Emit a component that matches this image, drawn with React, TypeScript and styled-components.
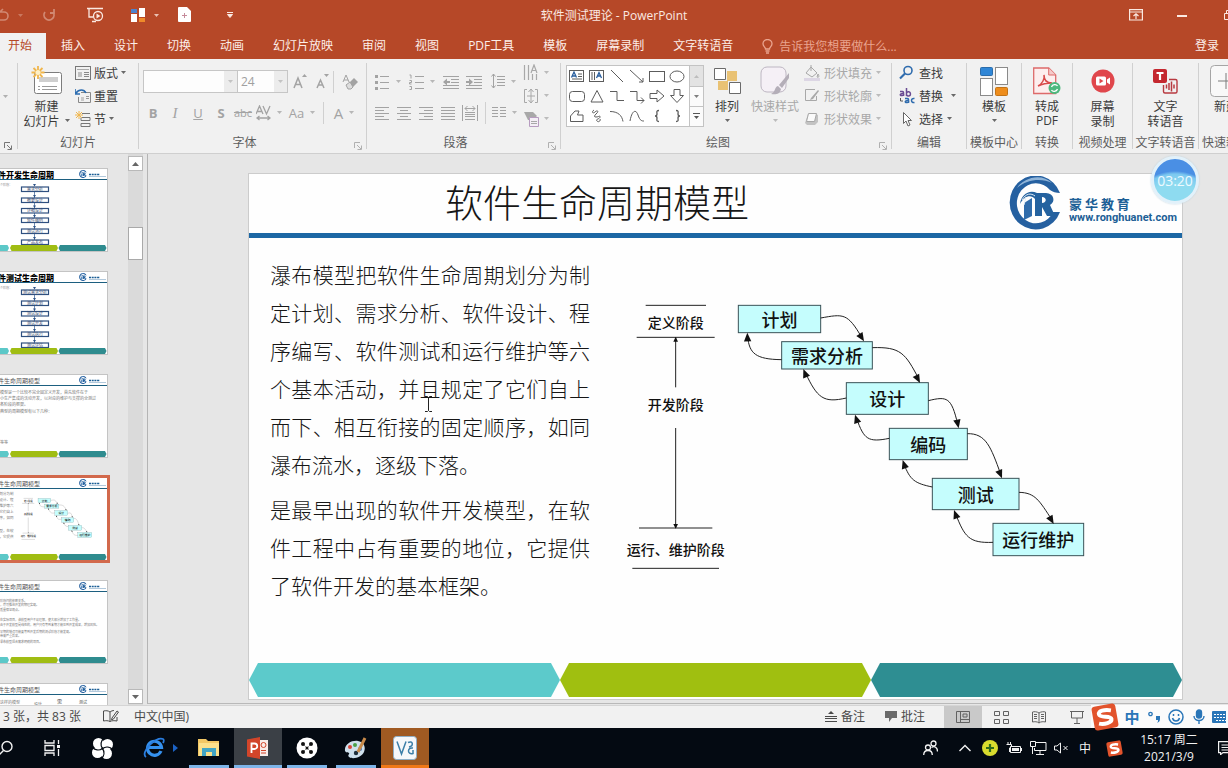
import React from "react";
import styled, { createGlobalStyle, css } from "styled-components";

const UI = `"Open Sans", "Noto Sans CJK SC", sans-serif`;
const CJK = `"Noto Sans CJK SC", sans-serif`;

const Global = createGlobalStyle`
  *, *::before, *::after { box-sizing: border-box; }
  body { margin: 0; font-family: ${UI}; font-size: 12px; color: #3b3b3b; }
  button, input, select { font: inherit; color: inherit; margin: 0; padding: 0; border: 0; background: none; }
  svg { display: block; flex: none; }
`;

const Window = styled.div`
  display: flex;
  flex-direction: column;
  height: 100vh;
  overflow: hidden;
  position: relative;
  background: #e6e6e6;
`;

/* ---------- title bar ---------- */

const TitleBar = styled.header`
  display: grid;
  grid-template-columns: 1fr auto 1fr;
  align-items: center;
  height: 33px;
  padding-bottom: 3px;
  flex: none;
  background: #b64828;
  color: #fbe9e2;
`;

const TitleSide = styled.div<{ $end?: boolean }>`
  display: flex;
  align-items: center;
  overflow: hidden;
  height: 30px;
  justify-content: ${(p) => (p.$end ? "flex-end" : "flex-start")};
`;

const BarButton = styled.button<{ $w: number; $dim?: boolean }>`
  display: flex;
  align-items: center;
  justify-content: center;
  flex: none;
  gap: 8px;
  width: ${(p) => p.$w}px;
  height: 30px;
  opacity: ${(p) => (p.$dim ? 0.4 : 1)};
`;

const AppTitle = styled.h1`
  margin: 0;
  font-size: 12px;
  font-weight: 400;
`;

/* ---------- tabs ---------- */

const TabBar = styled.nav`
  display: flex;
  height: 26px;
  flex: none;
  overflow: hidden;
  background: #b64828;
  color: #fdeee8;
`;

const Tab = styled.button<{ $active?: boolean }>`
  flex: none;
  padding: 0 14px 2px 15px;
  white-space: nowrap;
  &:first-child { margin-left: -7px; }
  ${(p) => p.$active && css`background: #f1f1f1; color: #b64828;`}
`;

const TellMe = styled.label`
  display: flex;
  align-items: center;
  gap: 6px;
  margin-left: 15px;
  flex: 1;
  color: #eaa48f;
`;

const TellInput = styled.input`
  width: 130px;
  outline: none;
  &::placeholder { color: #eaa48f; opacity: 1; }
`;

const SignIn = styled.button`
  flex: none;
  padding: 0 9px 2px;
`;

/* ---------- ribbon ---------- */

const Ribbon = styled.section`
  display: flex;
  flex: none;
  height: 95px;
  overflow: hidden;
  background: #f1f1f1;
  border-bottom: 1px solid #cfcfcf;
`;

const GroupBox = styled.div<{ $w: number; $dim?: boolean }>`
  position: relative;
  display: flex;
  flex-direction: column;
  flex: none;
  width: ${(p) => p.$w}px;
  padding-top: 2px;
`;

const GroupBody = styled.div<{ $pad?: number; $center?: boolean }>`
  display: flex;
  height: 70px;
  padding-left: ${(p) => p.$pad ?? 0}px;
  justify-content: ${(p) => (p.$center ? "center" : "flex-start")};
`;

const GroupFoot = styled.div`
  display: flex;
  align-items: center;
  height: 22px;
  color: #5d5d5d;
  white-space: nowrap;
`;

const GroupName = styled.span`
  flex: 1;
  text-align: center;
`;

const Launcher = styled.button<{ $dim?: boolean }>`
  width: 16px;
  height: 16px;
  flex: none;
  color: ${(p) => (p.$dim ? "#b0b0b0" : "#777")};
  padding: 7px 0 0 4px;
`;

const Rule = styled.i<{ $h?: number }>`
  flex: none;
  width: 1px;
  height: ${(p) => p.$h ?? 86}px;
  margin-top: ${(p) => (p.$h ? 0 : 4)}px;
  background: #d0d0d0;
`;

const BigButton = styled.button<{ $w: number; $dim?: boolean }>`
  display: flex;
  flex-direction: column;
  align-items: center;
  flex: none;
  width: ${(p) => p.$w}px;
  color: ${(p) => (p.$dim ? "#a8a8a8" : "#3b3b3b")};
  white-space: nowrap;
`;

const BigIcon = styled.span`
  display: flex;
  align-items: center;
  height: 37px;
  padding-top: 3px;
`;

const BigLine = styled.span`
  display: flex;
  align-items: center;
  gap: 5px;
  height: 15px;
`;

const Stack = styled.div<{ $w?: number }>`
  display: flex;
  flex-direction: column;
  flex: none;
  width: ${(p) => (p.$w ? p.$w + "px" : "auto")};
`;

const RowButton = styled.button<{ $dim?: boolean; $gap?: number; $pad?: number }>`
  display: flex;
  align-items: center;
  gap: ${(p) => p.$gap ?? 4}px;
  height: 23px;
  padding-left: ${(p) => p.$pad ?? 0}px;
  color: ${(p) => (p.$dim ? "#a8a8a8" : "#3b3b3b")};
  white-space: nowrap;
`;

const ToolRows = styled.div`
  display: flex;
  flex-direction: column;
  flex: none;
  padding-top: 5px;
`;

const ToolRow = styled.div`
  display: flex;
  align-items: center;
  height: 31px;
  color: #a3a3a3;
`;

const Tool = styled.button<{ $w: number }>`
  display: flex;
  align-items: center;
  justify-content: center;
  gap: 6px;
  flex: none;
  width: ${(p) => p.$w}px;
  height: 22px;
`;

const PasteMore = styled.button`
  display: flex;
  align-items: center;
  height: 70px;
  color: #9a9a9a;
`;

const Glyph = styled.span<{ $size?: number; $bold?: boolean; $italic?: boolean; $line?: string }>`
  font-size: ${(p) => p.$size ?? 13}px;
  line-height: 16px;
  font-weight: ${(p) => (p.$bold ? 700 : 400)};
  font-style: ${(p) => (p.$italic ? "italic" : "normal")};
  font-family: ${(p) => (p.$italic ? `"Liberation Serif", serif` : UI)};
  text-decoration: ${(p) => p.$line ?? "none"};
`;

const Combo = styled.span<{ $w: number }>`
  display: flex;
  align-items: center;
  position: relative;
  width: ${(p) => p.$w}px;
  height: 23px;
  margin-right: -1px;
  border: 1px solid #c6c6c6;
  background: #fdfdfd;
`;

const ComboSelect = styled.select`
  appearance: none;
  flex: 1;
  min-width: 0;
  height: 21px;
  padding-left: 3px;
  opacity: 1;
  font-size: 12px;
  color: #a0a0a0;
`;

const ComboArrow = styled.span`
  display: flex;
  align-items: center;
  justify-content: center;
  width: 13px;
  height: 21px;
  background: #ececec;
  color: #b5b5b5;
`;

const Gallery = styled.div`
  display: flex;
  height: 62px;
  margin-top: 4px;
  border: 1px solid #c3c3c3;
  background: #fff;
`;

const ShapeGrid = styled.div`
  display: grid;
  grid-template-columns: repeat(6, 20px);
  grid-template-rows: repeat(3, 20px);
  width: 122px;
  color: #5c5c5c;
`;

const ShapeCell = styled.button`
  display: flex;
  align-items: center;
  justify-content: center;
`;

const GalleryArrows = styled.div`
  display: grid;
  grid-template-rows: repeat(3, 1fr);
  width: 14px;
  border-left: 1px solid #c3c3c3;
`;

const GalleryArrow = styled.button<{ $dim?: boolean }>`
  display: flex;
  align-items: center;
  justify-content: center;
  color: ${(p) => (p.$dim ? "#bdbdbd" : "#555")};
  background: ${(p) => (p.$dim ? "#e3e3e3" : "#fbfbfb")};
  & + & { border-top: 1px solid #c3c3c3; }
`;

/* ---------- work area ---------- */

const Work = styled.main`
  display: flex;
  flex: 1;
  min-height: 0;
`;

const ThumbPane = styled.aside`
  width: 128px;
  flex: none;
  overflow: hidden;
  padding-top: 14px;
`;

const ThumbList = styled.ol`
  display: flex;
  flex-direction: column;
  gap: 19px;
  margin: 0 0 0 -42px;
  padding: 0;
  list-style: none;
`;

const ThumbItem = styled.li<{ $selected?: boolean }>`
  width: 150px;
  height: 84px;
  background: #fff;
  outline: ${(p) => (p.$selected ? "3px solid #d2694c" : "1px solid #c4c4c4")};
  outline-offset: -1px;
`;

const ScrollTrack = styled.div`
  display: flex;
  flex-direction: column;
  width: 15px;
  flex: none;
  padding: 2px 0 1px;
  background: #dadada;
`;

const ScrollButton = styled.button`
  display: flex;
  align-items: center;
  justify-content: center;
  height: 15px;
  flex: none;
  border: 1px solid #b9b9b9;
  background: #fff;
  color: #666;
`;

const ScrollRun = styled.div`
  flex: 1;
  padding-top: 56px;
`;

const ScrollThumb = styled.div`
  height: 33px;
  border: 1px solid #a9a9a9;
  background: #fff;
`;

const Canvas = styled.section`
  flex: 1;
  min-width: 0;
  display: flex;
  margin-left: 4px;
  padding: 20px 46px 4px 101px;
  border-left: 1px solid #b4b4b4;
  border-bottom: 1px solid #b9b9b9;
  margin-bottom: 1px;
`;

const Slide = styled.article`
  position: relative;
  display: flex;
  flex-direction: column;
  flex: 1;
  min-width: 0;
  background: #fefefe;
  outline: 1px solid #cccccc;
  color: #161616;
`;

const SlideHead = styled.div`
  display: flex;
  align-items: flex-start;
  justify-content: space-between;
  height: 59px;
  padding: 0 5px 0 196px;
`;

const SlideTitle = styled.h2`
  margin: 0;
  font: 300 38px/54px ${CJK};
  white-space: nowrap;
`;

const Brand = styled.div`
  display: flex;
  align-items: center;
  gap: 6px;
  padding-top: 2px;
`;

const BrandText = styled.div`
  display: flex;
  flex-direction: column;
  padding-top: 14px;
  color: #1c5f96;
`;

const BrandName = styled.span`
  font: 700 13px/15px ${CJK};
`;

const BrandLink = styled.a`
  font: 700 11px/14px Roboto, sans-serif;
  color: inherit;
  text-decoration: none;
`;

const BlueRule = styled.div`
  height: 5px;
  background: #1c67a4;
`;

const SlideBody = styled.div`
  position: relative;
  display: flex;
  flex: 1;
  min-height: 0;
  gap: 20px;
  padding: 17px 0 0 21px;
`;

const SlideText = styled.div`
  position: relative;
  flex: none;
  width: 320px;
`;

const Para = styled.p`
  margin: 0 0 7px;
  font: 300 21px/38px ${CJK};
  text-align: justify;
`;

const Figure = styled.div`
  padding-top: 35px;
`;

const Caret = styled.svg`
  position: absolute;
  left: 154px;
  top: 141px;
`;

const Bands = styled.div`
  display: flex;
  height: 34px;
  margin-bottom: 2px;
`;

const Band = styled.div<{ $c: string }>`
  flex: 1;
  background: ${(p) => p.$c};
  clip-path: polygon(0 50%, 9px 0, calc(100% - 9px) 0, 100% 50%, calc(100% - 9px) 100%, 9px 100%);
`;

const TimerBadge = styled.div`
  position: absolute;
  right: 29px;
  top: 156px;
  display: flex;
  align-items: center;
  justify-content: center;
  width: 48px;
  height: 48px;
  border-radius: 50%;
  border: 3px solid #e2f1fa;
  background: radial-gradient(circle at 21px 60px, #8edbf0 0 36px, #7cc8f0 45px, #4a8fe4 48px);
  color: #eefaff;
  font-size: 14px;
  box-shadow: 0 0 2px #b9cfdc;
`;

/* ---------- status bar ---------- */

const StatusBar = styled.footer`
  display: flex;
  align-items: center;
  height: 23px;
  flex: none;
  padding-left: 3px;
  background: #f1f1f1;
  border-top: 1px solid #d5d5d5;
  color: #4a4a4a;
  white-space: nowrap;
`;

const StatusItem = styled.button<{ $ml?: number }>`
  display: flex;
  align-items: center;
  gap: 4px;
  flex: none;
  height: 22px;
  padding-bottom: 3px;
  margin-left: ${(p) => p.$ml ?? 0}px;
`;

const Spacer = styled.span`
  flex: 1;
`;

const ViewButton = styled.button<{ $on?: boolean }>`
  display: flex;
  align-items: center;
  justify-content: center;
  flex: none;
  width: 38px;
  height: 22px;
  background: ${(p) => (p.$on ? "#c9c9c9" : "transparent")};
  color: #626262;
`;

const ViewGroup = styled.div`
  display: flex;
  flex: none;
  margin: 0 132px 0 19px;
`;

const ImeBar = styled.div`
  position: absolute;
  right: 0;
  bottom: 40px;
  display: flex;
  align-items: center;
  height: 23px;
  width: 137px;
  background: #fbfbfb;
  color: #2a76b8;
`;

const ImeSlot = styled.button<{ $w: number }>`
  display: flex;
  align-items: center;
  justify-content: center;
  flex: none;
  width: ${(p) => p.$w}px;
  font: 700 15px/20px ${CJK};
`;

/* ---------- taskbar ---------- */

const TaskBar = styled.footer`
  display: flex;
  height: 40px;
  flex: none;
  overflow: hidden;
  background: #040a12;
  color: #f2f2f2;
`;

const TaskItem = styled.button<{ $w: number; $bg?: string; $bar?: string; $pl?: number; $pr?: number }>`
  display: flex;
  align-items: center;
  justify-content: center;
  gap: 8px;
  flex: none;
  width: ${(p) => p.$w}px;
  padding: 0 ${(p) => p.$pr ?? 0}px 0 ${(p) => p.$pl ?? 0}px;
  margin: 0 ${(p) => (p.$bar && !p.$bg ? 4 : 0)}px;
  background: ${(p) => p.$bg ?? "transparent"};
  border-bottom: 3px solid ${(p) => p.$bar ?? "transparent"};
  border-top: 3px solid transparent;
`;

const Running = styled.div`
  display: flex;
  gap: 1px;
`;

const Tray = styled.div`
  display: flex;
  align-items: center;
  flex: none;
`;

const TrayItem = styled.button<{ $w: number; $pl?: number }>`
  display: flex;
  align-items: center;
  justify-content: center;
  flex: none;
  width: ${(p) => p.$w}px;
  padding-left: ${(p) => p.$pl ?? 0}px;
  height: 40px;
`;

const Clock = styled.time`
  display: flex;
  flex-direction: column;
  align-items: center;
  width: 78px;
  line-height: 17px;
  white-space: nowrap;
`;

/* ---------- drawing helpers ---------- */

type IconProps = { w?: number; h?: number; vb?: string; sw?: number; children: React.ReactNode };
const Icon = ({ w = 16, h = 16, vb, sw = 1, children }: IconProps) => (
  <svg width={w} height={h} viewBox={vb ?? `0 0 ${w} ${h}`} fill="none" stroke="currentColor" strokeWidth={sw} aria-hidden="true">
    {children}
  </svg>
);

const Down = () => (
  <Icon w={5} h={3}><path d="M0 0h5L2.500 3z" fill="currentColor" fillOpacity=".75" stroke="none" /></Icon>
);

const LauncherIcon = () => (
  <Icon w={8} h={8}><path d="M.5 6V.5H6M3 3l4 4M7.500 3.500v4h-4" /></Icon>
);

function Group({ w, name, pad, center, launcher, dimLauncher, children }: {
  w: number; name: string; pad?: number; center?: boolean; launcher?: boolean; dimLauncher?: boolean; children?: React.ReactNode;
}) {
  return (
    <>
      <GroupBox $w={w}>
        <GroupBody $pad={pad} $center={center}>{children}</GroupBody>
        <GroupFoot>
          {name && <GroupName>{name}</GroupName>}
          {launcher && <Launcher $dim={dimLauncher} aria-label={`${name}选项`}><LauncherIcon /></Launcher>}
        </GroupFoot>
      </GroupBox>
      <Rule />
    </>
  );
}

const Lines = ({ rows }: { rows: [number, number][] }) => (
  <Icon w={16} h={16}>{rows.map(([a, b], i) => <path key={i} d={`M${a} ${2.5 + i * 3}H${b}`} />)}</Icon>
);

const shapes: { name: string; art: React.ReactNode }[] = [
  { name: "横排文本框", art: <><rect x=".5" y="2.500" width="14" height="11" /><path d="M9 6h4M9 8.500h4M3 11h10" /><path d="M2.500 9.500 5 4l2.500 5.500M3.500 8h3" stroke="#2a5f9e" strokeWidth="1.300" /></> },
  { name: "竖排文本框", art: <><rect x=".5" y="2.500" width="14" height="11" /><path d="M3 4v8M5.500 4v8" /><path d="M7.500 10 10 4.500l2.500 5.500M8.500 8h3" stroke="#2a5f9e" strokeWidth="1.300" /></> },
  { name: "直线", art: <path d="M2 2l12 12" /> },
  { name: "箭头", art: <path d="M1 2l13 12M14 10v4h-4" /> },
  { name: "矩形", art: <rect x=".5" y="3.500" width="15" height="10" /> },
  { name: "椭圆", art: <ellipse cx="8" cy="8.500" rx="7" ry="5.500" /> },
  { name: "圆角矩形", art: <rect x=".5" y="3.500" width="15" height="10" rx="3" /> },
  { name: "三角形", art: <path d="M8 2.500 14 14H2z" /> },
  { name: "肘形连接符", art: <path d="M1 3.500h7v9h7" /> },
  { name: "肘形箭头", art: <path d="M1 3.500h7v9h7M12 9.500l3 3-3 3" /> },
  { name: "右箭头", art: <path d="M1 5.500h7V2l7 6-7 6v-3.500H1z" /> },
  { name: "下箭头", art: <path d="M5 1.500h6v6h3.500L8 14.500 1.500 7.500H5z" /> },
  { name: "任意多边形", art: <path d="M1.500 8 6 3h4L8.500 7h5.500v6.500H1.500z" /> },
  { name: "自由曲线", art: <path d="M5 2C2 4 4 6 6 4s4-1 2 1-4 4-1 4 4-2 4 0-5 2-3 4 4-1 3-2" /> },
  { name: "弧形", art: <path d="M1 3.500c8 0 12 4 13 10" /> },
  { name: "曲线", art: <path d="M1 13C3 2 7 1 9 7s4 6 6 6" /> },
  { name: "左大括号", art: <path d="M10 2.500c-3 0-2 2-2 3.500S7 8 6 8c1 0 2 .5 2 2s-1 3.500 2 3.500" strokeWidth="1.300" /> },
  { name: "右大括号", art: <path d="M7 2.500c3 0 2 2 2 3.500S10 8 11 8c-1 0-2 .5-2 2s1 3.500-2 3.500" strokeWidth="1.300" /> },
];

/* Waterfall model figure, shared by the slide and its thumbnail */
const steps = [
  { t: "计划", x: 385, y: 46, w: 247, h: 82 },
  { t: "需求分析", x: 515, y: 155, w: 272, h: 82 },
  { t: "设计", x: 709, y: 278, w: 246, h: 95 },
  { t: "编码", x: 838, y: 415, w: 234, h: 94 },
  { t: "测试", x: 967, y: 565, w: 260, h: 94 },
  { t: "运行维护", x: 1149, y: 700, w: 272, h: 97 },
];

const links = [
  "M632 84C700 72 712 68 755 142",
  "M787 173C872 170 886 190 926 266",
  "M955 332C1012 318 1024 322 1043 402",
  "M1072 431C1128 430 1142 470 1172 552",
  "M1227 607C1276 608 1288 632 1326 690",
  "M515 209C436 208 418 190 413 140",
  "M709 324C640 340 622 324 586 248",
  "M838 445C774 458 762 448 740 386",
  "M967 591C914 580 900 570 882 522",
  "M1149 757C1076 760 1064 740 1037 672",
];

const heads: [number, number, number][] = [
  [762, 154, 58], [930, 279, 62], [1046, 415, 78], [1176, 565, 68], [1331, 702, 60],
  [412, 128, -92], [580, 237, -112], [735, 374, -108], [878, 510, -108], [1032, 660, -110],
];

const Waterfall = () => (
  <g fontFamily={CJK} fill="#111" textAnchor="middle">
    <g stroke="#222" strokeWidth="3" fill="none">
      <path d="M107 46H288M80 142H314M87 714H307M67 835H327M197 142V292M197 414V714" />
    </g>
    <path d="M190 155L197 140 204 155zM190 702L197 716 204 702z" />
    <g fontSize="42" fontWeight="500">
      <text x="197" y="113">定义阶段</text>
      <text x="197" y="359">开发阶段</text>
      <text x="197" y="795">运行、维护阶段</text>
    </g>
    {steps.map((s) => (
      <g key={s.t}>
        <rect x={s.x} y={s.y} width={s.w} height={s.h} fill="#c5fdfd" stroke="#3a5358" strokeWidth="3" />
        <text x={s.x + s.w / 2} y={s.y + s.h / 2 + 23} fontSize="54" fontWeight="500">{s.t}</text>
      </g>
    ))}
    <g stroke="#222" strokeWidth="3" fill="none">{links.map((d) => <path key={d} d={d} />)}</g>
    {heads.map(([x, y, a]) => <path key={x} d="M0 0L-26-11V11z" transform={`translate(${x} ${y}) rotate(${a})`} />)}
  </g>
);

const LogoMark = () => (
  <g stroke="none">
    <path d="M51 17A26 27 0 1 0 51 36H44A19 20 0 1 1 41 14Q45 17 51 17z" fill="#2560a0" />
    <path d="M8 12C15 1 33-3 43 7 33 2 18 3 8 12z" fill="#8fb4d8" />
    <path d="M11 28C12 19 20 13 28 17H37C45 17 47 26 41 29L46 40H38L33 31V40H26V23C22 18 15 20 11 28z" fill="#24629f" />
    <path d="M33 21V27C38 27 38 21 33 21z" fill="#fefefe" />
    <path d="M15 27L23 22V40L15 44z" fill="#2f6cab" />
    <path d="M13 24C17 17 22 17 26 20M17 21L15 29" fill="none" stroke="#e4eef6" strokeWidth="1" />
  </g>
);

const ThumbFrame = ({ title, bold, children }: { title: string; bold?: boolean; children?: React.ReactNode }) => (
  <svg width="150" height="84" viewBox="0 0 150 84" fontFamily={CJK}>
    <text x={bold ? 96 : 82} y={bold ? 10 : 9} textAnchor="end" fontSize={bold ? 8 : 6} fontWeight={bold ? 900 : 400} fill={bold ? "#000" : "#555"}>{title}</text>
    <g transform="translate(121 2) scale(.15)"><LogoMark /></g>
    <path d="M131 6.500h11" stroke="#1c5f96" strokeWidth="1.500" strokeDasharray="2 .7" />
    <path d="M131 8.500h17" stroke="#7ea5c4" strokeWidth=".6" />
    <path d="M0 11.500H149" stroke="#1c5f80" strokeWidth="1" />
    {children}
    <path d="M1 80l1.500-3h47L51 80l-1.500 3h-47z" fill="#5cc8c8" />
    <path d="M52 80l1.500-3h45L100 80l-1.500 3h-45z" fill="#a0bd13" />
    <path d="M100.500 80l1.500-3h45L148.500 80 147 83h-45z" fill="#2f8c8f" />
  </svg>
);

const FlowChart = ({ labels }: { labels: string[] }) => (
  <g>
    <text x="0" y="18" fontSize="3" fill="#888">软件的整个生命周期分为以下几个阶段：</text>
    <path d="M76.500 21V74" stroke="#4a6c9c" strokeWidth=".8" />
    {labels.map((l, i) => {
      const y = [19, 30, 40.5, 50, 61, 72][i];
      return (
        <g key={l}>
          <path d={`M75 ${y - 3}h3l-1.500 2.500z`} fill="#2f5488" />
          <rect x="63.500" y={y} width="27" height="4.500" fill="#fff" stroke="#2f5080" strokeWidth="1.200" />
          <text x="77" y={y + 3.7} fontSize="4" textAnchor="middle" fill="#3b4c70">{l}</text>
        </g>
      );
    })}
  </g>
);

const MiniText = ({ x = 42, size = 4, lines }: { x?: number; size?: number; lines: [number, string][] }) => (
  <g fontSize={size} fill="#777">{lines.map(([y, t]) => <text key={y} x={x} y={y}>{t}</text>)}</g>
);

const SogouMark = ({ s }: { s: number }) => (
  <Icon w={s} h={s} vb="0 0 28 28">
    <g transform="rotate(-10 14 14)">
      <rect x="2" y="2" width="24" height="24" rx="3" fill="#e2532c" stroke="none" />
      <path d="M21 8.500C15 6.500 8 6.500 8.500 10.500S20 13 20 17s-8 4.500-13 2.500" stroke="#fff" strokeWidth="4" />
    </g>
  </Icon>
);

const tabs = ["开始", "插入", "设计", "切换", "动画", "幻灯片放映", "审阅", "视图", "PDF工具", "模板", "屏幕录制", "文字转语音"];

export default function App() {
  return (
    <Window>
      <Global />
      <TitleBar>
        <TitleSide>
          <BarButton $w={10} $dim aria-label="撤消"><Icon w={10} h={14} sw={1.6}><path d="M0 4h4a4 4 0 0 1 0 8H0M0 4l3-3" /></Icon></BarButton>
          <BarButton $w={20} $dim aria-label="撤消列表"><Down /></BarButton>
          <BarButton $w={37} $dim aria-label="恢复"><Icon w={14} h={14} sw={1.8}><path d="M3 4a5 5 0 1 0 8 0M8 5h4V1" /></Icon></BarButton>
          <BarButton $w={56} aria-label="从头开始"><Icon w={17} h={16} sw={1.3}><path d="M0 1.500h16M2 2v8h4M5 14.500h4" /><circle cx="11" cy="9" r="4.500" /><path d="M9.500 6.500v5l4-2.500z" fill="currentColor" stroke="none" /></Icon></BarButton>
          <BarButton $w={44} aria-label="模板">
            <Icon w={15} h={15}><g stroke="none"><path fill="#4d82cc" d="M0 1h6v4H0z" /><path fill="#fff" d="M0 6h6v8H0zM8 0h6v9H8z" /><path fill="#ef8a2a" d="M8 10h6v4H8z" /></g></Icon>
            <Down />
          </BarButton>
          <BarButton $w={35} aria-label="新建"><Icon w={13} h={16}><path d="M1 0h8l4 4v10a1 1 0 0 1-1 1H1a1 1 0 0 1-1-1V1a1 1 0 0 1 1-1z" fill="#fff" stroke="none" /><path d="M4 8.500h5M6.500 6v5" stroke="#c58a9a" /></Icon></BarButton>
          <BarButton $w={56} aria-label="自定义快速访问工具栏"><Icon w={7} h={6}><path d="M0 .5h6M.5 2.500h5L3 5.500z" fill="currentColor" /></Icon></BarButton>
        </TitleSide>
        <AppTitle>软件测试理论 - PowerPoint</AppTitle>
        <TitleSide $end>
          <BarButton $w={46} aria-label="功能区显示选项"><Icon w={14} h={12} sw={1.2}><path d="M.6.6h12.800v10.400H.6zM.6 3h13M7 10V5M4.500 7 7 4.800 9.500 7" /></Icon></BarButton>
          <BarButton $w={46} aria-label="最小化"><Icon w={10} h={6} sw={2}><path d="M0 4h10" /></Icon></BarButton>
          <BarButton $w={23} aria-label="还原"><Icon w={23} h={10}><path d="M19.500 3.500h6v6h-6zM21.500 3V.5H26" /></Icon></BarButton>
        </TitleSide>
      </TitleBar>

      <TabBar>
        {tabs.map((t, i) => <Tab key={t} $active={i === 0}>{t}</Tab>)}
        <TellMe>
          <Icon w={11} h={15} sw={1.3}><path d="M3.500 10C3.500 8 1 7.500 1 4.800a4.500 4.300 0 0 1 9 0C10 7.500 7.500 8 7.500 10zM3.500 12h4M4 14h3" /></Icon>
          <TellInput placeholder="告诉我您想要做什么..." aria-label="告诉我您想要做什么" />
        </TellMe>
        <SignIn>登录</SignIn>
      </TabBar>

      <Ribbon>
        <Group w={17} name="" launcher pad={3}><PasteMore aria-label="粘贴选项"><Down /></PasteMore></Group>

        <Group w={120} name="幻灯片">
          <BigButton $w={57}>
            <BigIcon><Icon w={32} h={30}>
              <rect x="3.500" y="6.500" width="27" height="21" rx="2" fill="#fff" stroke="#7c7c7c" /><path d="M8 11h19v5H8z" fill="#cfcfcf" stroke="none" /><path d="M7 20.500h2M11 20.500h15M7 23.500h2M11 23.500h15" stroke="#9a9a9a" />
              <path d="M7 0v13M.5 6.500h13M2.500 2l9 9M11.500 2l-9 9" stroke="#f0b64c" strokeWidth="1.800" /><circle cx="7" cy="6.500" r="2.500" fill="#fdf0c8" stroke="none" />
            </Icon></BigIcon>
            <BigLine>新建</BigLine>
            <BigLine>幻灯片 <Down /></BigLine>
          </BigButton>
          <Stack>
            <RowButton $gap={3}><Icon><rect x=".5" y="1.500" width="15" height="13" stroke="#777" /><path d="M2 4.500h12" stroke="#aaa" /><path d="M3 7h4v5H3z" fill="#c0c0c0" stroke="none" /><path d="M9 7.500h5M9 9.500h5M9 11.500h5" stroke="#888" /></Icon>版式<Down /></RowButton>
            <RowButton $gap={3}><Icon><path d="M6 4.500h9.500v10H3.500V9" stroke="#888" /><path d="M6 9h3v4H6z" fill="#c9c9c9" stroke="none" /><path d="M11 8.500h3M11 10.500h3" stroke="#999" /><path d="M1 5c3-4 8-4 10 0M0 1v5h5" stroke="#2b6cb0" strokeWidth="1.600" /></Icon>重置</RowButton>
            <RowButton $gap={3}><Icon><path d="M7 2.500h8M6 6.500h9v3H6zM6 12.500h9v3H6z" stroke="#777" /><path d="M4 0v8M0 4h8M1 1l6 6M7 1 1 7" stroke="#f0b64c" /></Icon>节<Down /></RowButton>
          </Stack>
        </Group>

        <Group w={227} name="字体" launcher dimLauncher pad={4}>
          <ToolRows>
            <ToolRow>
              <Combo $w={95}><ComboSelect aria-label="字体" disabled><option></option></ComboSelect><ComboArrow><Down /></ComboArrow></Combo>
              <Combo $w={51}><ComboSelect aria-label="字号" disabled><option>24</option></ComboSelect><ComboArrow><Down /></ComboArrow></Combo>
              <Tool $w={26} aria-label="增大字号"><Icon w={14} h={16} sw={1.5}><path d="M1 14 5 4l4 10M2.500 10.500h5" /><path d="M9 3h5l-2.500-3z" fill="currentColor" stroke="none" /></Icon></Tool>
              <Tool $w={20} aria-label="减小字号"><Icon w={14} h={16} sw={1.5}><path d="M1 14 4.500 6 8 14M2.500 11h4" /><path d="M8 0h5l-2.500 3z" fill="currentColor" stroke="none" /></Icon></Tool>
              <Rule $h={22} />
              <Tool $w={32} aria-label="清除格式"><Icon w={16} h={16}><path d="M1 8 4 1l3 7M2 6h4" /><path d="M8 8l4-4 4 4-5 5-3-1z" fill="currentColor" stroke="none" /><path d="M4 11l4-3 3 5-2 2H6z" fill="#ddd" /></Icon></Tool>
            </ToolRow>
            <ToolRow>
              <Tool $w={20}><Glyph $bold>B</Glyph></Tool>
              <Tool $w={24}><Glyph $italic $size={15}>I</Glyph></Tool>
              <Tool $w={22}><Glyph $line="underline">U</Glyph></Tool>
              <Tool $w={24}><Glyph $bold>S</Glyph></Tool>
              <Tool $w={20}><Glyph $size={11} $line="line-through">abc</Glyph></Tool>
              <Tool $w={32} aria-label="字符间距"><Icon w={15} h={16} sw={1.3}><path d="M0 9 3.500 1 7 9M1.500 6.500h4M7 1l3.500 8L14 1M1 13h13M3.500 11l-2.500 2 2.500 2M11.500 11l2.500 2-2.500 2" /></Icon><Down /></Tool>
              <Tool $w={34}><Glyph>Aa</Glyph><Down /></Tool>
              <Tool $w={4} aria-hidden="true" />
              <Rule $h={22} />
              <Tool $w={40}><Glyph $size={15}>A</Glyph><Down /></Tool>
            </ToolRow>
          </ToolRows>
        </Group>

        <Group w={193} name="段落" launcher dimLauncher pad={4}>
          <ToolRows>
            <ToolRow>
              <Tool $w={34} aria-label="项目符号"><Icon w={15} h={16}><path d="M5 2.500h9M5 8.500h9M5 14.500h9" /><path d="M0 1h3v3H0zM0 7h3v3H0zM0 13h3v3H0z" fill="currentColor" stroke="none" /></Icon><Down /></Tool>
              <Tool $w={34} aria-label="编号"><Icon w={15} h={16}><path d="M6 2.500h9M6 8.500h9M6 14.500h9M.5 1H2v3.500M.5 6.500h2v2h-2v1.500h2M.5 12.500h2v3h-2" /></Icon><Down /></Tool>
              <Tool $w={23} aria-label="减少缩进"><Icon w={16}><path d="M0 2.500h16M8 5.500h8M8 8.500h8M0 11.500h16M0 14.500h16" /><path d="M7 7H4V4.500L0 8l4 3.500V9h3z" fill="currentColor" stroke="none" /></Icon></Tool>
              <Tool $w={23} aria-label="增加缩进"><Icon w={16}><path d="M0 2.500h16M8 5.500h8M8 8.500h8M0 11.500h16M0 14.500h16" /><path d="M0 7h3V4.500L7 8l-4 3.500V9H0z" fill="currentColor" stroke="none" /></Icon></Tool>
              <Tool $w={37} aria-label="行距"><Icon w={14} h={17}><path d="M6 3.500h8M6 6.500h8M6 9.500h8M6 12.500h8M2.500 1v14M.5 3.500l2-2.500 2 2.500M.5 12.500l2 2.500 2-2.500" /></Icon><Down /></Tool>
            </ToolRow>
            <ToolRow>
              <Tool $w={22} aria-label="左对齐"><Lines rows={[[1, 15], [1, 10], [1, 15], [1, 10], [1, 15]]} /></Tool>
              <Tool $w={22} aria-label="居中"><Lines rows={[[1, 15], [4, 12], [1, 15], [4, 12], [1, 15]]} /></Tool>
              <Tool $w={22} aria-label="右对齐"><Lines rows={[[1, 15], [6, 15], [1, 15], [6, 15], [1, 15]]} /></Tool>
              <Tool $w={22} aria-label="两端对齐"><Lines rows={[[1, 15], [1, 15], [1, 15], [1, 15], [1, 15]]} /></Tool>
              <Tool $w={22} aria-label="分散对齐"><Icon w={16}><path d="M.5 0v16M15.500 0v16M3 7.500h10M3 9.500h10M3 11.500h10M3 14.500h10M3 3.500h10M5.500 1 3 3.500 5.500 6M10.500 1 13 3.500 10.500 6" /></Icon></Tool>
              <Tool $w={4} aria-hidden="true" />
              <Rule $h={22} />
              <Tool $w={36} aria-label="分栏"><Icon w={14} h={14}><path d="M0 1.500h6M8 1.500h6M0 4.500h6M8 4.500h6M0 7.500h6M8 7.500h6M0 10.500h6M8 10.500h6" /></Icon><Down /></Tool>
            </ToolRow>
          </ToolRows>
          <Stack>
            <RowButton $dim aria-label="文字方向"><Icon w={18} h={18} sw={1.2}><path d="M2.500 1v15M6.500 1v15M10.500 10v6M14.500 10v6M9 9l3-8 3 8M10 6.500h4" /></Icon><Down /></RowButton>
            <RowButton $dim aria-label="对齐文本"><Icon w={18} h={16}><path d="M5 1.500H2.500v13H5M13 1.500h2.500v13H13M5 8h8M9 1v14M6.500 4 9 1l2.500 3M6.500 12 9 15l2.500-3" /></Icon><Down /></RowButton>
            <RowButton $dim aria-label="转换为 SmartArt"><Icon w={18} h={16}><path d="M2 1h9l4 4-4 4H6z" fill="currentColor" stroke="none" /><path d="M7.500 6.500h9v9h-9z" fill="#f4eef6" stroke="#b79cc0" /><path d="M9 10.500h6M9 12.500h6" /></Icon><Down /></RowButton>
          </Stack>
        </Group>

        <Group w={330} name="绘图" launcher dimLauncher pad={5}>
          <Gallery>
            <ShapeGrid>
              {shapes.map((s) => <ShapeCell key={s.name} aria-label={s.name}><Icon>{s.art}</Icon></ShapeCell>)}
            </ShapeGrid>
            <GalleryArrows>
              <GalleryArrow $dim aria-label="上一行"><Icon w={5} h={3}><path d="M0 3h5L2.500 0z" fill="currentColor" stroke="none" /></Icon></GalleryArrow>
              <GalleryArrow aria-label="下一行"><Down /></GalleryArrow>
              <GalleryArrow aria-label="其他"><Icon w={7} h={7}><path d="M0 .5h7" /><path d="M1 3h5L3.500 6z" fill="currentColor" stroke="none" /></Icon></GalleryArrow>
            </GalleryArrows>
          </Gallery>
          <BigButton $w={46}>
            <BigIcon><Icon w={27} h={28}><path d="M13 4h10v10H13zM4 14h10v9H4z" fill="#e9c274" stroke="none" /><path d="M.5 1.500h11v11H.5zM15.500 15.500h11v11h-11z" fill="#fff" stroke="#6a6a6a" /></Icon></BigIcon>
            <BigLine>排列</BigLine>
            <BigLine><Down /></BigLine>
          </BigButton>
          <BigButton $w={50} $dim>
            <BigIcon><Icon w={30} h={30}><rect x="1" y="1" width="25" height="25" rx="6" fill="#f5f0f6" stroke="#bdb6c2" /><path d="M29 7 19 19l3 3 7-10zM18 20c-4 1-2 6-7 8 5 1 9 0 10-5z" fill="#b4aeb8" stroke="none" /></Icon></BigIcon>
            <BigLine>快速样式</BigLine>
            <BigLine><Down /></BigLine>
          </BigButton>
          <Stack $w={84}>
            <RowButton $dim $pad={4}><Icon><path d="M7 2 13 8 8 12 2 8zM7 6V0M14 9c2 3 0 4-1 3z" /><path d="M0 13h16v3H0z" fill="#dcd6e4" stroke="none" /></Icon>形状填充<Down /></RowButton>
            <RowButton $dim $pad={4}><Icon><path d="M11 1.500H1.500v11h11V8" /><path d="M14 2 7 10l-1 2 3-1 6-8z" fill="currentColor" stroke="none" /></Icon>形状轮廓<Down /></RowButton>
            <RowButton $dim $pad={4}><Icon><path d="M4 3h8l2 1v7l-3 3H3l-2-2z" fill="#c3c3c3" stroke="none" /><path d="M4.500 2.500h8l-2 8h-8z" fill="#fafafa" /></Icon>形状效果<Down /></RowButton>
          </Stack>
        </Group>

        <Group w={74} name="编辑" pad={7}>
          <Stack>
            <RowButton><Icon><circle cx="9" cy="5.500" r="4" stroke="#2f6cae" strokeWidth="1.600" /><path d="M6 8.500 1 13.500" stroke="#2f6cae" strokeWidth="2.200" /></Icon>查找</RowButton>
            <RowButton>
              <Icon>
                <g strokeWidth="1.500">
                  <path d="M1 3.500h2.500c1 0 1 .5 1 1V8M4.500 5.500c-4-.5-4 2.500-1.500 2s1.500-1 1.500-2M7.500 0v8M7.500 5c1-2 4-1.500 4 1s-3 2.500-4 1" stroke="#6a4c93" />
                  <path d="M6 10.500h2.500c1 0 1 .5 1 1V15M9.500 12.500c-4-.5-4 2.500-1.500 2s1.500-1 1.500-2M15.500 10.500c-4-1-4 5 0 4" stroke="#2f6cae" />
                </g>
                <path d="M1.500 10v3h2.500" stroke="#555" />
              </Icon>
              替换<span /><Down />
            </RowButton>
            <RowButton><Icon><path d="M4.500 1.500v11l2.500-2.500 2 5 2-1-2-4.500h3.500z" stroke="#666" fill="#fff" /></Icon>选择<Down /></RowButton>
          </Stack>
        </Group>

        <Group w={54} name="模板中心" center>
          <BigButton $w={52}>
            <BigIcon><Icon w={29} h={29}><rect x=".5" y=".5" width="12" height="8" rx="1" fill="#2f86d6" stroke="#2a6cab" /><rect x=".5" y="11.500" width="12" height="17" fill="#fff" stroke="#8a8a8a" /><rect x="15.500" y=".5" width="12" height="17" fill="#fff" stroke="#8a8a8a" /><rect x="15.500" y="20.500" width="12" height="8" rx="1" fill="#ee8d1c" stroke="#c27419" /></Icon></BigIcon>
            <BigLine>模板</BigLine>
            <BigLine><Down /></BigLine>
          </BigButton>
        </Group>

        <Group w={50} name="转换" center>
          <BigButton $w={50}>
            <BigIcon><Icon w={28} h={28}><path d="M.7 1h15l7 7v18.500H.7z" fill="#fdeeee" stroke="#dd6a6a" strokeWidth="1.300" /><path d="M15.700 1v7h7" fill="#f5caca" stroke="#dd6a6a" /><path d="M5 19c4-2 7-7 6-11 0 5 3 8 8 8-5 0-10 1-14 3z" stroke="#d84a4a" strokeWidth="1.500" /><circle cx="21.500" cy="21" r="6" fill="#4cb97e" stroke="none" /><path d="M18.500 20c1-3 5-3 6-1M24.500 22c-1 3-5 3-6 1" stroke="#fff" strokeWidth="1.300" /></Icon></BigIcon>
            <BigLine>转成</BigLine>
            <BigLine>PDF</BigLine>
          </BigButton>
        </Group>

        <Group w={59} name="视频处理" center>
          <BigButton $w={52}>
            <BigIcon><Icon w={24} h={24}><circle cx="12" cy="12" r="11.500" fill="#e0474c" stroke="none" /><rect x="5" y="7.500" width="10" height="9" rx="1.500" fill="#fff" stroke="none" /><path d="M16 10.500l3-2v7l-3-2z" fill="#fff" stroke="none" /><path d="M8.500 9.500v5l4-2.500z" fill="#e0474c" stroke="none" /></Icon></BigIcon>
            <BigLine>屏幕</BigLine>
            <BigLine>录制</BigLine>
          </BigButton>
        </Group>

        <Group w={65} name="文字转语音" center>
          <BigButton $w={64}>
            <BigIcon><Icon w={25} h={25}><rect x="0" y="0" width="14" height="14" rx="2" fill="#c4282f" stroke="none" /><path d="M3.500 4h7M7 4v7" stroke="#fff" strokeWidth="2.200" /><path d="M16 10.500h6.500a1.500 1.500 0 0 1 1.500 1.500v10.500a1.500 1.500 0 0 1-1.500 1.500H12a1.500 1.500 0 0 1-1.500-1.500V16" stroke="#b83a40" strokeWidth="1.400" /><path d="M13.500 15.500v4M16 14v7M18.500 12.500v10M21 15.500v4" stroke="#b83a40" strokeWidth="1.500" /></Icon></BigIcon>
            <BigLine>文字</BigLine>
            <BigLine>转语音</BigLine>
          </BigButton>
        </Group>

        <Group w={54} name="快速新建" center>
          <BigButton $w={52}>
            <BigIcon><Icon w={32} h={32}><rect x=".5" y=".5" width="31" height="31" rx="4" fill="#f8f8f8" stroke="#a5a5a5" /><path d="M8 16h16M16 8v16" stroke="#7a7a7a" /></Icon></BigIcon>
            <BigLine>新建</BigLine>
          </BigButton>
        </Group>
      </Ribbon>

      <Work>
        <ThumbPane>
          <ThumbList>
            <ThumbItem><ThumbFrame title="软件开发生命周期" bold><FlowChart labels={["需求分析", "概要设计", "详细设计", "软件编码", "测试运行", "产品发布"]} /></ThumbFrame></ThumbItem>
            <ThumbItem><ThumbFrame title="软件测试生命周期" bold><FlowChart labels={["测试需求分析", "测试计划", "测试设计", "测试开发", "测试执行", "测试评估"]} /></ThumbFrame></ThumbItem>
            <ThumbItem><ThumbFrame title="软件生命周期模型">
              <MiniText lines={[[20, "模型是一个比较不完全固定义开发，首先软件在于"], [26, "小生产集成的活动开发，以对应的维护与支撑的全测过"], [32, "各阶段的框架。"], [39, "典型的周期模型有以下几种："], [70, "等等"]]} />
            </ThumbFrame></ThumbItem>
            <ThumbItem $selected><ThumbFrame title="软件生命周期模型">
              <MiniText x={3} size={3.5} lines={[[18, "瀑布模型把软件生命周期划分为制"], [24, "定计划、需求分析、软件设计、程"], [30, "序编写、软件测试和运行维护等六"], [36, "个基本活动，并且规定了它们自上"], [42, "而下、相互衔接的固定顺序，如同"], [48, "瀑布流水，逐级下落。"], [55, "是最早出现的软件开发模型，在软"], [61, "件工程中占有重要的地位，它提供"], [67, "了软件开发的基本框架。"]]} />
              <g transform="translate(60 19) scale(.052)"><Waterfall /></g>
            </ThumbFrame></ThumbItem>
            <ThumbItem><ThumbFrame title="软件生命周期模型">
              <MiniText size={3} lines={[[22, "阶段间的依赖关系。"], [26, "，尽可推迟开发的物理实现。"], [31, "质量保证观点。"], [41, "在实际项目，该模型用户不易理解，使大部分增加了工作量。"], [46, "由于开发模型是线性的，用户只有等到末期才能见到开发成果，增加风险。"], [53, "早期的错误可能要等到开发后期的测试阶段才能发现。"], [57, "带来严重后果。"], [63, "瀑布模型适合需求明确的项目。"]]} />
            </ThumbFrame></ThumbItem>
            <ThumbItem><ThumbFrame title="软件生命周期模型">
              <MiniText lines={[[21, "这样的模型"]]} />
              <text x="99" y="20" fontSize="5" fill="#444">需</text>
              <text x="76" y="23" fontSize="4" fill="#555">设计</text>
              <text x="121" y="21" fontSize="4" fill="#555">测试</text>
            </ThumbFrame></ThumbItem>
          </ThumbList>
        </ThumbPane>
        <ScrollTrack>
          <ScrollButton aria-label="向上滚动"><Icon w={7} h={4}><path d="M0 4h7L3.500 0z" fill="currentColor" stroke="none" /></Icon></ScrollButton>
          <ScrollRun><ScrollThumb /></ScrollRun>
          <ScrollButton aria-label="向下滚动"><Icon w={7} h={4}><path d="M0 0h7L3.500 4z" fill="currentColor" stroke="none" /></Icon></ScrollButton>
        </ScrollTrack>

        <Canvas>
          <Slide>
            <SlideHead>
              <SlideTitle>软件生命周期模型</SlideTitle>
              <Brand>
                <Icon w={54} h={54}><LogoMark /></Icon>
                <BrandText>
                  <BrandName>蒙 华 教 育</BrandName>
                  <BrandLink href="#">www.ronghuanet.com</BrandLink>
                </BrandText>
              </Brand>
            </SlideHead>
            <BlueRule />
            <SlideBody>
              <SlideText>
                <Para>瀑布模型把软件生命周期划分为制定计划、需求分析、软件设计、程序编写、软件测试和运行维护等六个基本活动，并且规定了它们自上而下、相互衔接的固定顺序，如同瀑布流水，逐级下落。</Para>
                <Para>是最早出现的软件开发模型，在软件工程中占有重要的地位，它提供了软件开发的基本框架。</Para>
                <Caret width="9" height="16" viewBox="0 0 9 16" fill="none" stroke="#222"><path d="M1 .5h2.500l1 1 1-1H8M1 15.500h2.500l1-1 1 1H8M4.500 1.500v13" /></Caret>
              </SlideText>
              <Figure>
                <svg width="490" height="290" viewBox="0 0 1470 870" role="img" aria-label="瀑布模型"><Waterfall /></svg>
              </Figure>
            </SlideBody>
            <Bands><Band $c="#5ccacb" /><Band $c="#a0bf10" /><Band $c="#2e8e92" /></Bands>
          </Slide>
        </Canvas>
      </Work>

      <StatusBar>
        <StatusItem>3 张，共 83 张</StatusItem>
        <StatusItem $ml={22} aria-label="拼写检查"><Icon w={16} h={14}><path d="M7 12.500C5 11.500 3 11.500.5 12V2C3 1.500 5 1.500 7 3v9.500c2-1 4-1 7-.5V8M7 3c1-1 3-1.500 4-1.500M9 9l5-7 1.500 1-5 7-2 .8z" /></Icon></StatusItem>
        <StatusItem $ml={15}>中文(中国)</StatusItem>
        <Spacer />
        <StatusItem><Icon w={12} h={12}><path d="M3 4h6L6 1z" fill="currentColor" stroke="none" /><path d="M0 6.500h12M0 8.500h12M0 11.500h12" /></Icon>备注</StatusItem>
        <StatusItem $ml={20}><Icon w={12} h={12}><path d="M0 1h12v7H7l-3 4V8H0z" fill="#6a6a6a" stroke="none" /></Icon>批注</StatusItem>
        <ViewGroup>
          <ViewButton $on aria-label="普通视图"><Icon w={14} h={12}><path d="M.5.500h13v11H.5zM4.500.5v11M4.500 8.500h9M7 3h4v3H7z" /></Icon></ViewButton>
          <ViewButton aria-label="幻灯片浏览"><Icon w={15} h={13}><path d="M.5.500h5v4h-5zM9.500.5h5v4h-5zM.5 8.500h5v4h-5zM9.500 8.500h5v4h-5z" /></Icon></ViewButton>
          <ViewButton aria-label="阅读视图"><Icon w={14} h={13}><path d="M7 12V2C5 .5 2 .5.5 1v10c2-.5 5-.5 6.500 1 1.500-1.500 4.500-1.500 6.500-1V1C12 .5 9 .5 7 2M2 3.500h3M2 5.500h3M2 7.500h3M9 3.500h3M9 5.500h3M9 7.500h3" /></Icon></ViewButton>
          <ViewButton aria-label="幻灯片放映"><Icon w={14} h={14}><path d="M0 1.500h14M1.500 2v6h11V2M7 8v5M4 13.500h6" /></Icon></ViewButton>
        </ViewGroup>
      </StatusBar>

      <TaskBar>
        <TaskItem $w={28} $pr={16} aria-label="搜索"><Icon w={14} h={16} sw={1.4}><circle cx="8" cy="6.500" r="5" /><path d="M4.500 10.500 0 15" /></Icon></TaskItem>
        <TaskItem $w={48} aria-label="任务视图"><Icon w={17} h={16} sw={1.3}><path d="M1 0v3h9V0M1 16v-3h9v3M1 5.500h9v5H1zM14.500 0v4M14.500 9v7" /><path d="M13 5h3v3h-3z" fill="currentColor" stroke="none" /></Icon></TaskItem>
        <TaskItem $w={52} aria-label="风扇浏览器">
          <Icon w={21} h={21}>
            <g fill="#fff" stroke="none"><circle cx="6.500" cy="5.500" r="5.500" /><circle cx="15.500" cy="6.500" r="5.500" /><circle cx="14.500" cy="15.500" r="5.500" /><circle cx="5.500" cy="14.500" r="5.500" /></g>
            <path d="M10.500 10.500C7 13 3 12 .5 9.500M10.500 10.500C8 7 9 3 11.500.5M10.500 10.500C14 8 18 9 20.500 11.500M10.500 10.500C13 14 12 18 9.500 20.500" stroke="#040a12" strokeWidth="1.300" />
          </Icon>
        </TaskItem>
        <TaskItem $w={57} $pl={8} aria-label="Internet Explorer">
          <Icon w={22} h={22}><path d="M18 14a7 7 0 1 1 .5-3.500H6" stroke="#3591ee" strokeWidth="3.200" /><path d="M3 20C-3 16 12-1 20 2c1 .5 1 2 0 4" stroke="#2a7ee0" strokeWidth="1.800" /></Icon>
          <Icon w={5} h={8}><path d="M0 0l5 4-5 4z" fill="#1b62c4" stroke="none" /></Icon>
        </TaskItem>
        <Running>
          <TaskItem $w={40} $bar="#7db4e8" aria-label="文件资源管理器"><Icon w={22} h={20}><g stroke="none"><path d="M0 1h8l2 2h11v15H0z" fill="#f2c765" /><path d="M1 5h20v13H1z" fill="#fbe08c" /><path d="M4 10h14v8h-4v-4H8v4H4z" fill="#42a5c4" /></g></Icon></TaskItem>
          <TaskItem $w={48} $bg="#3b4046" $bar="#7db4e8" aria-label="PowerPoint"><Icon w={22} h={22}><g stroke="none"><path d="M11 3h10v16H11z" fill="#f7ece9" /><path d="M0 2.500 13 0v22L0 19.500z" fill="#d2452a" /></g><path d="M4.500 16V6.500h3a2.700 2.700 0 0 1 0 5.500h-3" stroke="#fff" strokeWidth="1.800" /><circle cx="16.500" cy="8" r="2.500" stroke="#d2452a" /><path d="M14 13.500h5M14 16h5" stroke="#d2452a" /></Icon></TaskItem>
          <TaskItem $w={40} $bar="#7db4e8" aria-label="录屏工具"><Icon w={22} h={22}><circle cx="11" cy="11" r="10.500" fill="#fff" stroke="none" /><path d="M7 7l8 8M15 7l-8 8" stroke="#999" /><g fill="#111" stroke="none"><circle cx="7" cy="7" r="2" /><circle cx="15" cy="7" r="2" /><circle cx="7" cy="15" r="2" /><circle cx="15" cy="15" r="2" /><circle cx="11" cy="11" r="1.500" /></g></Icon></TaskItem>
          <TaskItem $w={40} $bar="#7db4e8" aria-label="画图"><Icon w={24} h={22}><g stroke="none"><path d="M1 14C0 7 8 3 14 4s8 6 6 11-11 8-15 5c-2-2 1-3 0-4s-3 0-4-2z" fill="#cfe0ec" /><circle cx="6" cy="10" r="2" fill="#d9473a" /><circle cx="11" cy="8" r="2" fill="#4aa04a" /><circle cx="16" cy="12" r="2" fill="#3a78c8" /><circle cx="12" cy="16" r="2.200" fill="#20303c" /></g><path d="M21 1 14 15" stroke="#c98b4a" strokeWidth="3" /></Icon></TaskItem>
          <TaskItem $w={48} $bg="#a05a22" $bar="#f07818" aria-label="VNote"><Icon w={24} h={24}><rect x=".5" y=".5" width="23" height="23" rx="3" fill="#f6f8fa" stroke="#8fb0c8" /><path d="M4 5.500 8.500 18 13 5.500" stroke="#3c7fa8" strokeWidth="1.500" /><path d="M15 6.500c5-2.500 6 3.500 1 4.500M20 12c-6-1-6 7 0 5.500V14" stroke="#3c7fa8" strokeWidth="1.500" /></Icon></TaskItem>
        </Running>
        <Spacer />
        <Tray>
          <TrayItem $w={44} aria-label="人脉"><Icon w={15} h={16} sw={1.3}><circle cx="5" cy="7.500" r="2.500" /><path d="M.7 15c0-6 8.600-6 8.600 0" /><circle cx="10.500" cy="3.500" r="2.500" /><path d="M8.500 7.500c3-2 6 0 6 4" /></Icon></TrayItem>
          <TrayItem $w={26} aria-label="显示隐藏的图标"><Icon w={12} h={8} sw={1.4}><path d="M.5 7 6 1.500 11.500 7" /></Icon></TrayItem>
          <TrayItem $w={24} aria-label="安全卫士"><Icon><circle cx="8" cy="8" r="8" fill="#d9dc2e" stroke="none" /><path d="M8 4v8M4 8h8" stroke="#2f6b1c" strokeWidth="2.200" /></Icon></TrayItem>
          <TrayItem $w={24} aria-label="电源"><Icon w={16} h={12}><path d="M4.500 4.500h10v6h-10z" /><path d="M6 6h7v3H6zM15 6h1v3h-1z" fill="currentColor" stroke="none" /><path d="M2 0v2M4.500 0v2M.5 2.500h5v2l-2 1.500v4" /></Icon></TrayItem>
          <TrayItem $w={24} aria-label="网络"><Icon w={17} h={14}><path d="M5 1.500h11v8H4.500V7M10 10v3M6 13.500h8M.5.500h5v5h-5zM2.500 6v7" /></Icon></TrayItem>
          <TrayItem $w={22} aria-label="音量"><Icon w={15} h={12}><path d="M.5 4v4H3l3.500 3V1L3 4zM9.500 4l4 4M13.500 4l-4 4" /></Icon></TrayItem>
          <TrayItem $w={26}>中</TrayItem>
          <TrayItem $w={32} aria-label="搜狗输入法"><SogouMark s={17} /></TrayItem>
          <Clock><span>15:17 周二</span><span>2021/3/9</span></Clock>
          <TrayItem $w={20} $pl={10} aria-label="通知"><Icon w={11} h={14} sw={1.2}><path d="M12 .6H.6v11h2v2L5 11.600h7M3.500 4H11M3.500 6.500H11M3.500 9H11" /></Icon></TrayItem>
        </Tray>
      </TaskBar>

      <TimerBadge>03:20</TimerBadge>
      <ImeBar>
        <ImeSlot $w={28} aria-label="搜狗"><SogouMark s={28} /></ImeSlot>
        <ImeSlot $w={26}>中</ImeSlot>
        <ImeSlot $w={18} aria-label="标点"><Icon w={13} h={12}><circle cx="2.500" cy="3" r="1.700" strokeWidth="1.300" /><path d="M8 5h4v3c0 2-1 3-3 4 1-1 1-2 1-3H8z" fill="currentColor" stroke="none" /></Icon></ImeSlot>
        <ImeSlot $w={26} aria-label="表情"><Icon w={16} h={16} sw={1.5}><circle cx="8" cy="8" r="7" /><path d="M4.500 9c1 4 6 4 7 0M5.500 5v2M10.500 5v2" /></Icon></ImeSlot>
        <ImeSlot $w={20} aria-label="语音"><Icon w={12} h={16} sw={1.4}><rect x="3.500" y="1" width="5" height="8" rx="2.500" fill="currentColor" /><path d="M1 7c0 6 10 6 10 0M6 12v3" /></Icon></ImeSlot>
        <ImeSlot $w={19} aria-label="软键盘"><Icon w={14} h={12}><path d="M1 0h13v12H1a1 1 0 0 1-1-1V1a1 1 0 0 1 1-1z" fill="currentColor" stroke="none" /><path d="M2 3.500h12M2 6.500h12M4 9.500h10" stroke="#fff" strokeDasharray="2 1" /></Icon></ImeSlot>
      </ImeBar>
    </Window>
  );
}
